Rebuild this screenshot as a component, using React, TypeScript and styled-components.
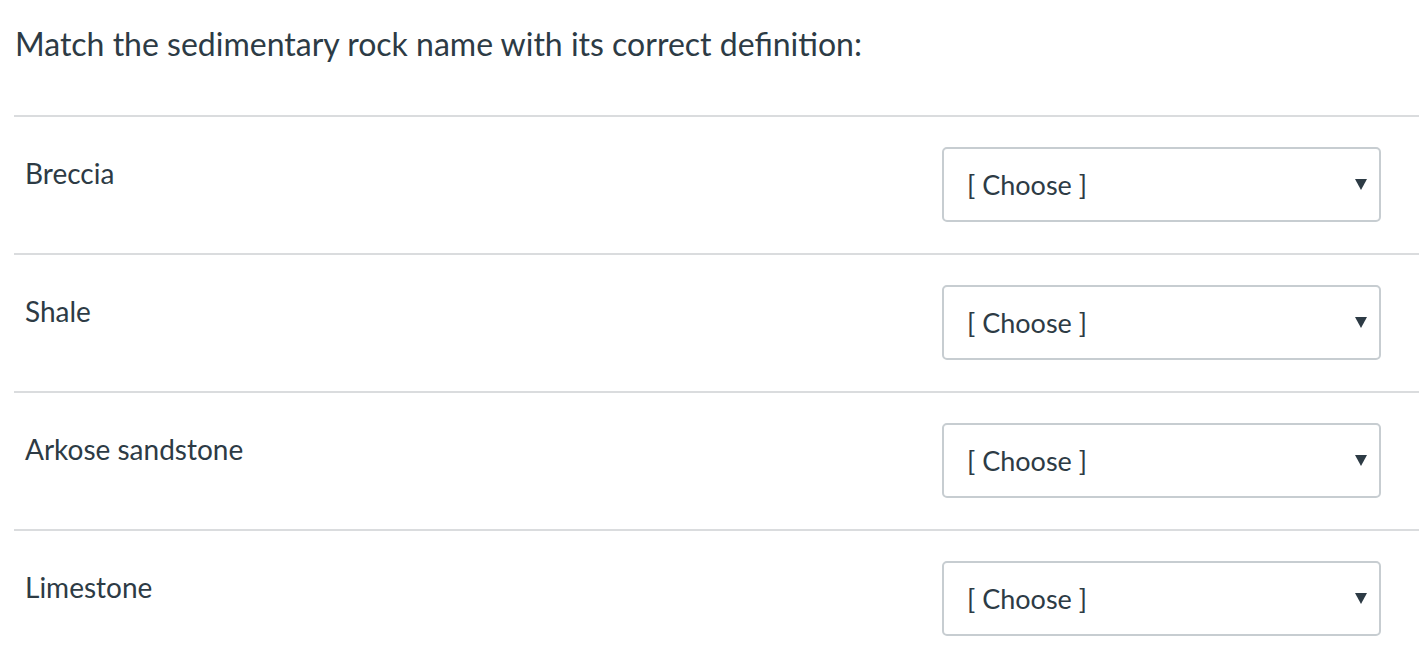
import React, { FC } from 'react';
import styled, { createGlobalStyle } from 'styled-components';

const GlobalStyle = createGlobalStyle`
  body {
    margin: 0;
    background: #ffffff;
    font-family: Lato, "Open Sans", sans-serif;
    color: #2d3b45;
  }
`;

const Page = styled.div`
  padding: 0 0 0 14px;
`;

const Question = styled.h2`
  margin: 0;
  padding: 22px 0 0 1px;
  height: 115px;
  box-sizing: border-box;
  font-size: 32px;
  font-weight: 400;
  line-height: 44px;
`;

const Row = styled.div`
  display: flex;
  justify-content: space-between;
  align-items: flex-start;
  border-top: 2px solid #dadcde;
  height: 138px;
  box-sizing: border-box;
  padding: 30px 38px 0 11px;
`;

const Label = styled.div`
  font-size: 28px;
  line-height: 36px;
  padding-top: 8px;
`;

const Select = styled.div`
  width: 439px;
  height: 75px;
  box-sizing: border-box;
  border: 2px solid #c7cdd1;
  border-radius: 5px;
  display: flex;
  align-items: center;
  justify-content: space-between;
  padding: 0 12px 0 23px;
  font-size: 27px;
`;

const Arrow = styled.span`
  width: 0;
  height: 0;
  border-left: 6px solid transparent;
  border-right: 6px solid transparent;
  border-top: 11px solid #2d3b45;
`;

const rocks = ['Breccia', 'Shale', 'Arkose sandstone', 'Limestone'];

const App: FC = () => (
  <Page>
    <GlobalStyle />
    <Question>Match the sedimentary rock name with its correct definition:</Question>
    {rocks.map((rock) => (
      <Row key={rock}>
        <Label>{rock}</Label>
        <Select>
          <span>[ Choose ]</span>
          <Arrow />
        </Select>
      </Row>
    ))}
  </Page>
);

export default App;
